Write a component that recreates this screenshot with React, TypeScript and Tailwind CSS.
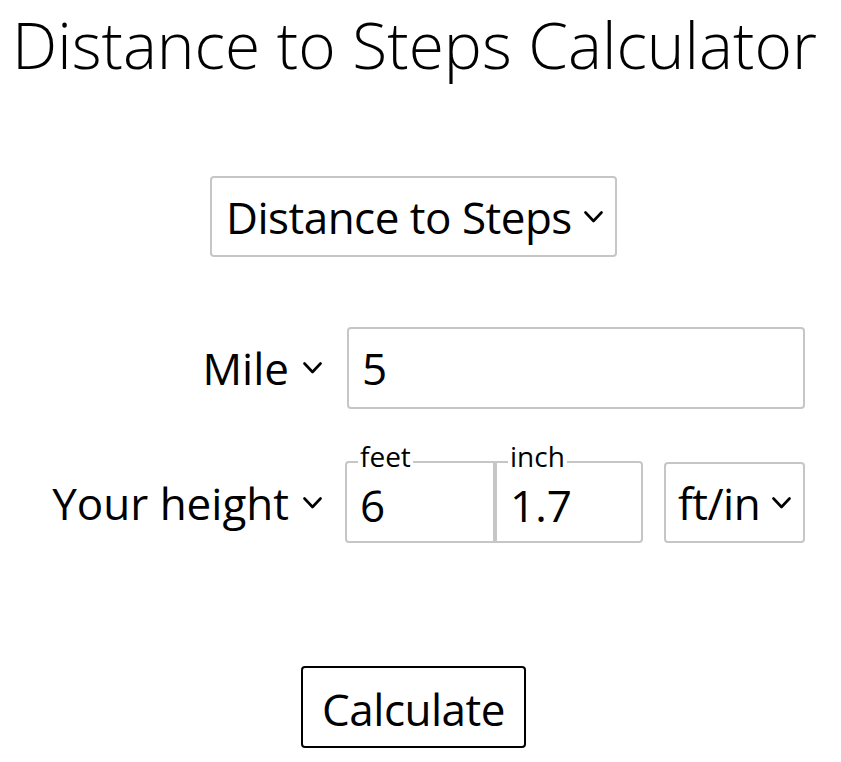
import React from "react";

function Chevron({ className = "" }: { className?: string }) {
  return (
    <svg className={className} width="19" height="12" viewBox="0 0 19 12" fill="none">
      <polyline points="1.5,1.5 9.5,10 17.5,1.5" stroke="#000" strokeWidth="2.6" strokeLinecap="round" strokeLinejoin="round" />
    </svg>
  );
}

export default function App() {
  return (
    <div className="w-[827px] bg-white text-black font-['Open_Sans','Noto_Sans',sans-serif]">
      <h1 className="pl-[12px] pt-[2px] text-[64px] font-light leading-[86px]">
        Distance to Steps Calculator
      </h1>

      <div className="mt-[88px] flex justify-center">
        <div className="flex h-[81px] w-[407px] items-center justify-between rounded-[4px] border-2 border-[#c6c6c6] pl-[14px] pr-[12px] text-[44px] tracking-[-0.5px]">
          <span>Distance to Steps</span>
          <Chevron />
        </div>
      </div>

      <div className="mt-[70px] flex items-center">
        <div className="flex w-[322px] items-center justify-end gap-[14px] text-[44px]">
          <span>Mile</span>
          <Chevron />
        </div>
        <div className="ml-[25px] flex h-[82px] w-[458px] items-center rounded-[4px] border-2 border-[#c6c6c6] pl-[13px] text-[44px]">
          5
        </div>
      </div>

      <div className="mt-[32px] flex items-end">
        <div className="flex h-[81px] w-[322px] items-center justify-end gap-[14px] text-[44px]">
          <span>Your height</span>
          <Chevron />
        </div>
        <div className="ml-[23px] flex">
          <fieldset className="h-[102px] w-[150px] rounded-l-[4px] border-2 border-[#c6c6c6] pl-[11px]">
            <legend className="px-[2px] pb-[12px] text-[28px] leading-[30px]">feet</legend>
            <div className="mt-[-8px] pl-[2px] text-[44px] leading-[60px]">6</div>
          </fieldset>
          <fieldset className="h-[102px] w-[148px] rounded-r-[4px] border-2 border-[#c6c6c6] pl-[11px]">
            <legend className="px-[2px] pb-[12px] text-[28px] leading-[30px]">inch</legend>
            <div className="mt-[-8px] pl-[2px] text-[44px] leading-[60px]">1.7</div>
          </fieldset>
        </div>
        <div className="ml-[21px] flex h-[81px] w-[141px] items-center justify-between rounded-[4px] border-2 border-[#c6c6c6] pl-[12px] pr-[12px] text-[44px] tracking-[-0.5px]">
          <span>ft/in</span>
          <Chevron />
        </div>
      </div>

      <div className="mt-[123px] flex justify-center">
        <button className="h-[82px] w-[225px] rounded-[4px] border-2 border-black bg-white pt-[4px] text-[44px] tracking-[-0.5px]">
          Calculate
        </button>
      </div>
    </div>
  );
}
